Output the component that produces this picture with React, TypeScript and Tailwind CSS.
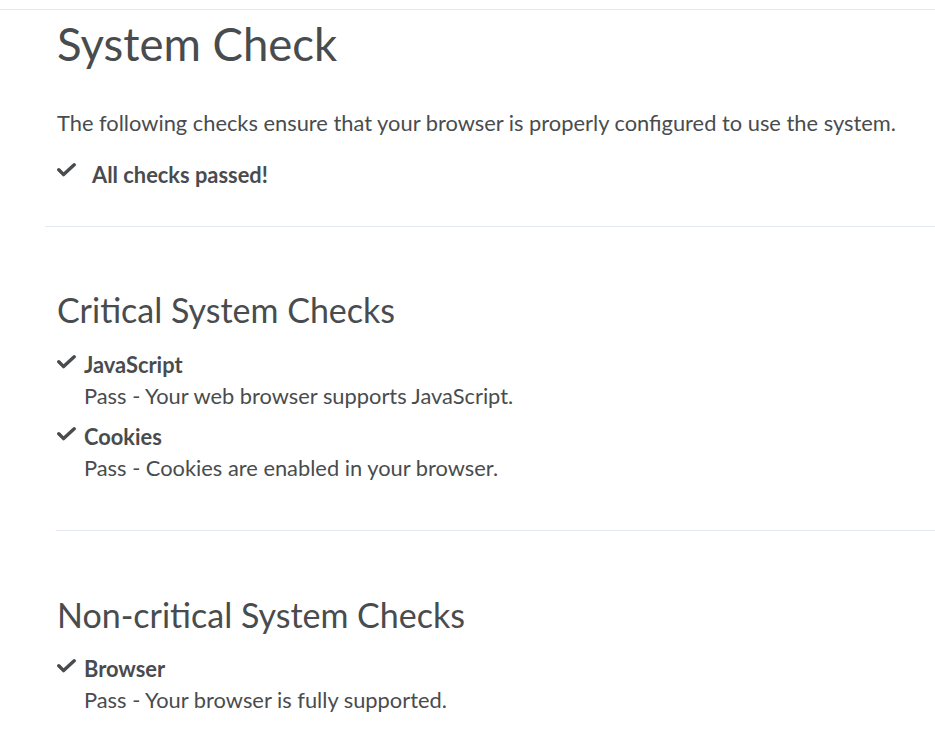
const critical = [
  { name: "JavaScript", detail: "Pass - Your web browser supports JavaScript." },
  { name: "Cookies", detail: "Pass - Cookies are enabled in your browser." },
];

const nonCritical = [
  { name: "Browser", detail: "Pass - Your browser is fully supported." },
];

function CheckIcon({ className = "" }: { className?: string }) {
  return (
    <svg
      viewBox="0 0 19 15"
      className={`w-[19px] h-[15px] shrink-0 ${className}`}
      fill="none"
      stroke="currentColor"
      strokeWidth={3.4}
      strokeLinecap="round"
      strokeLinejoin="round"
    >
      <path d="M1.8 6.8 6.6 11.6 17.2 1.8" />
    </svg>
  );
}

function CheckItem({ name, detail }: { name: string; detail: string }) {
  return (
    <li className="flex items-start gap-[8px]">
      <CheckIcon className="mt-[6px]" />
      <div className="leading-[31px]">
        <div className="font-bold">{name}</div>
        <div>{detail}</div>
      </div>
    </li>
  );
}

export default function App() {
  return (
    <div
      className="min-h-screen bg-white text-[#494c4e] text-[21.85px]"
      style={{ fontFamily: "Lato, 'Noto Sans', sans-serif" }}
    >
      <div className="border-t border-[#e6e6e6] mt-[9px]" />

      <section className="pl-[57px] pb-[35px]">
        <h1 className="text-[45.5px] leading-[54px] mt-[7px]">System Check</h1>
        <p className="mt-[36px] leading-[32px]">
          The following checks ensure that your browser is properly configured
          to use the system.
        </p>
        <div className="flex items-start gap-[16px] mt-[20px] font-bold leading-[32px]">
          <CheckIcon className="mt-[4px]" />
          All checks passed!
        </div>
      </section>

      <div className="border-t border-[#e3e9f1] ml-[45px]" />

      <section className="pl-[57px] pb-[47px]">
        <h2 className="text-[34px] leading-[42px] mt-[62px]">
          Critical System Checks
        </h2>
        <ul className="mt-[18px] space-y-[10px]">
          {critical.map((c) => (
            <CheckItem key={c.name} {...c} />
          ))}
        </ul>
      </section>

      <div className="border-t border-[#e3e9f1] ml-[56px]" />

      <section className="pl-[57px] pb-[20px]">
        <h2 className="text-[34px] leading-[42px] mt-[63px]">
          Non-critical System Checks
        </h2>
        <ul className="mt-[17px] space-y-[10px]">
          {nonCritical.map((c) => (
            <CheckItem key={c.name} {...c} />
          ))}
        </ul>
      </section>
    </div>
  );
}
